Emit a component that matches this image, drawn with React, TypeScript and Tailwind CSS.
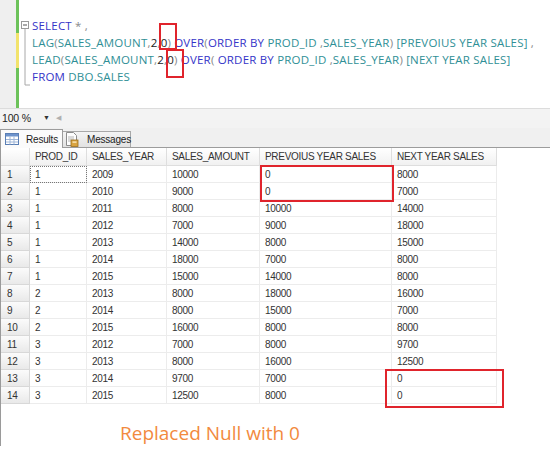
const cols = ["w-[29px]", "w-[57px]", "w-[80px]", "w-[93px]", "w-[132px]", "w-[105px]"];

const headers = ["", "PROD_ID", "SALES_YEAR", "SALES_AMOUNT", "PREVOIUS YEAR SALES", "NEXT YEAR SALES"];

const rows = [
  [1, 2009, 10000, 0, 8000],
  [1, 2010, 9000, 0, 7000],
  [1, 2011, 8000, 10000, 14000],
  [1, 2012, 7000, 9000, 18000],
  [1, 2013, 14000, 8000, 15000],
  [1, 2014, 18000, 7000, 8000],
  [1, 2015, 15000, 14000, 8000],
  [2, 2013, 8000, 18000, 16000],
  [2, 2014, 8000, 15000, 7000],
  [2, 2015, 16000, 8000, 8000],
  [3, 2012, 7000, 8000, 9700],
  [3, 2013, 8000, 16000, 12500],
  [3, 2014, 9700, 7000, 0],
  [3, 2015, 12500, 8000, 0],
];

const K = "text-[#3434c8]"; // keywords
const T = "text-[#2f8f96]"; // identifiers
const G = "text-[#8a8a8a]"; // punctuation
const B = "text-[#222]"; // literals

function ResultsIcon() {
  return (
    <svg width="14" height="12" viewBox="0 0 14 12" className="shrink-0">
      <rect x="0.5" y="0.5" width="13" height="11" fill="#fff" stroke="#5a7fb5" />
      <rect x="1" y="1" width="12" height="2.5" fill="#6d93cc" />
      <path d="M1 6.5h12M1 9h12M5 3.5v8M9 3.5v8" stroke="#9fb6d8" strokeWidth="1" />
    </svg>
  );
}

function MessagesIcon() {
  return (
    <svg width="14" height="15" viewBox="0 0 14 15" className="shrink-0">
      <path d="M1.5 0.5h7l3 3v10h-10z" fill="#fdfdfd" stroke="#8c8c8c" />
      <path d="M3 5h6M3 7h6M3 9h4" stroke="#b5b5b5" />
      <rect x="6" y="8" width="7" height="6.5" fill="#d9a441" stroke="#9a6e1c" strokeWidth="0.8" />
      <rect x="7.5" y="9.5" width="4" height="1.2" fill="#fff3cf" />
    </svg>
  );
}

function Boxed({ top, h }: { top: string; h: string }) {
  return (
    <span className="relative">
      <span className={G}>,</span>
      <span className={B}>0</span>
      <span className={G}>)</span>
      <span className={`absolute left-[2px] w-[18px] border-2 border-[#e0242c] ${top} ${h}`} />
    </span>
  );
}

export default function App() {
  return (
    <div className="w-[550px] h-[458px] bg-white overflow-hidden relative">
      {/* Query editor */}
      <div className="flex h-[108px]">
        <div className="w-[16px] bg-[#efefef]" />
        <div className="w-[3px] flex flex-col">
          <div className="h-[33px] bg-[#6cc25a]" />
          <div className="h-[35px] bg-[#f2e36c]" />
          <div className="flex-1 bg-[#6cc25a]" />
        </div>
        <svg width="13" height="108" className="shrink-0">
          <rect x="2.5" y="21.5" width="7" height="7" fill="#fff" stroke="#9a9a9a" />
          <path d="M4 25h4" stroke="#555" />
          <path d="M6 29v56h5" stroke="#a8a8a8" fill="none" />
        </svg>
        <div className="pt-[17px] font-['Open_Sans',sans-serif] text-[11.5px] leading-[17px] tracking-[0.2px] whitespace-nowrap">
          <div>
            <span className={K}>SELECT</span>
            <span className={G}> * ,</span>
          </div>
          <div>
            <span className={T}>LAG</span>
            <span className={G}>(</span>
            <span className={T}>SALES_AMOUNT</span>
            <span className={G}>,</span>
            <span className={B}>2</span>
            <Boxed top="-top-[12px]" h="h-[27px]" />
            <span className={G}> </span>
            <span className={K}>OVER</span>
            <span className={G}>(</span>
            <span className={K}>ORDER BY </span>
            <span className={T}>PROD_ID </span>
            <span className={G}>,</span>
            <span className={T}>SALES_YEAR</span>
            <span className={G}>) </span>
            <span className={T}>[PREVOIUS YEAR SALES]</span>
            <span className={G}> ,</span>
          </div>
          <div>
            <span className={T}>LEAD</span>
            <span className={G}>(</span>
            <span className={T}>SALES_AMOUNT</span>
            <span className={G}>,</span>
            <span className={B}>2</span>
            <Boxed top="-top-[3px]" h="h-[29px]" />
            <span className={G}> </span>
            <span className={K}>OVER</span>
            <span className={G}>( </span>
            <span className={K}>ORDER BY </span>
            <span className={T}>PROD_ID </span>
            <span className={G}>,</span>
            <span className={T}>SALES_YEAR</span>
            <span className={G}>) </span>
            <span className={T}>[NEXT YEAR SALES]</span>
          </div>
          <div>
            <span className={K}>FROM </span>
            <span className={T}>DBO.SALES</span>
          </div>
        </div>
      </div>

      {/* Zoom bar */}
      <div className="h-[20px] bg-[#f3f3f3] border-t border-[#dcdcdc] flex items-center pl-[2px] font-['Liberation_Sans',sans-serif] text-[10.5px] tracking-[-0.2px] text-[#222]">
        <span className="w-[41px]">100 %</span>
        <span className="w-[13px] text-[7px] text-[#333]">▼</span>
        <span className="text-[7px] text-[#b0b0b0]">◀</span>
      </div>

      {/* Tabs */}
      <div className="h-[20px] bg-[#f0f0f0] border-b border-[#9c9c9c] flex items-end font-['Liberation_Sans',sans-serif] text-[10px] tracking-[-0.2px] text-[#222]">
        <div className="h-[19px] w-[63px] shrink-0 bg-[#fbfbfb] border border-b-0 border-[#9c9c9c] flex items-center gap-[7px] pl-[4px] -mb-px">
          <ResultsIcon />
          <span>Results</span>
        </div>
        <div className="h-[16px] w-[68px] shrink-0 bg-gradient-to-b from-[#f4f4f4] to-[#e2e2e2] border border-b-0 border-l-0 border-[#a8a8a8] flex items-center gap-[8px] pl-[2px]">
          <MessagesIcon />
          <span>Messages</span>
        </div>
      </div>

      {/* Results grid */}
      <div className="h-[298px] border-l border-[#9a9a9a] font-['Liberation_Sans',sans-serif] text-[10px] tracking-[-0.3px] text-[#333] relative">
        <div className="flex h-[18px]">
          {headers.map((h, i) => (
            <div
              key={i}
              className={`${cols[i]} shrink-0 bg-gradient-to-b from-white to-[#f1f1f1] border-r border-b border-[#dedede] flex items-center pl-[5px]`}
            >
              {h}
            </div>
          ))}
        </div>
        {rows.map((r, ri) => (
          <div key={ri} className="flex h-[17px]">
            <div className="w-[29px] shrink-0 bg-gradient-to-b from-[#fbfbfb] to-[#e9e9e9] border-r border-b border-[#d8d8d8] flex items-center pl-[6px]">
              {ri + 1}
            </div>
            {r.map((v, ci) => (
              <div
                key={ci}
                className={`${cols[ci + 1]} shrink-0 border-r border-b border-[#ececec] flex items-center pl-[5px] ${
                  ri === 0 && ci === 0 ? "outline-1 outline-dotted outline-[#777] -outline-offset-1" : ""
                }`}
              >
                {v}
              </div>
            ))}
          </div>
        ))}
        {/* highlight boxes */}
        <div className="absolute left-[259px] top-[17px] w-[134px] h-[37px] border-2 border-[#e0242c]" />
        <div className="absolute left-[384px] top-[221px] w-[119px] h-[39px] border-2 border-[#e0242c]" />
        <div className="pl-[119px] pt-[17px] font-['Open_Sans',sans-serif] text-[19px] tracking-normal text-[#f28a3e] leading-[24px]">
          Replaced Null with 0
        </div>
      </div>
    </div>
  );
}
